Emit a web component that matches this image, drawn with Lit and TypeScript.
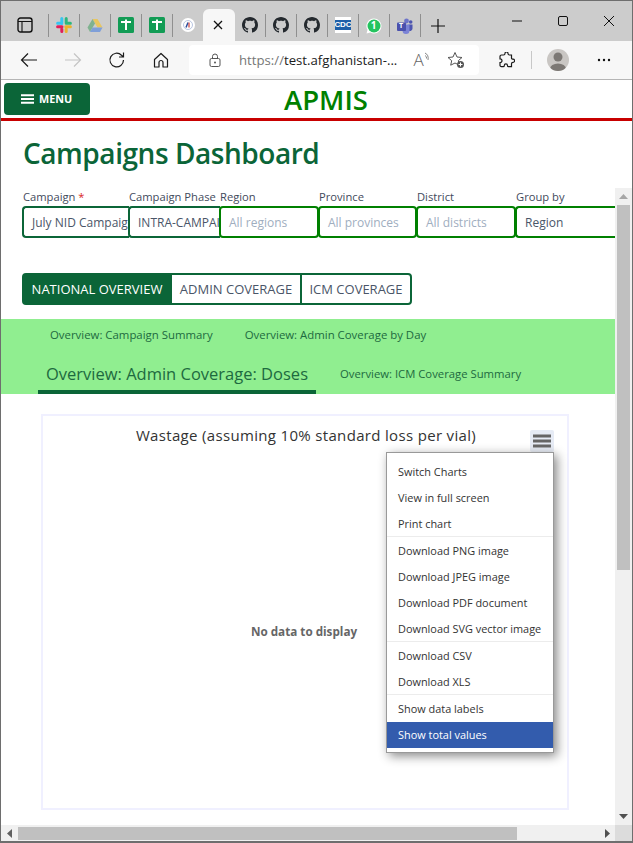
import { LitElement, html, css } from "lit";
import { customElement } from "lit/decorators.js";

const GH = "M8 0C3.58 0 0 3.58 0 8c0 3.54 2.29 6.53 5.47 7.59.4.07.55-.17.55-.38 0-.19-.01-.82-.01-1.49-2.01.37-2.53-.49-2.69-.94-.09-.23-.48-.94-.82-1.13-.28-.15-.68-.52-.01-.53.63-.01 1.08.58 1.23.82.72 1.21 1.87.87 2.33.66.07-.52.28-.87.51-1.07-1.78-.2-3.64-.89-3.64-3.95 0-.87.31-1.59.82-2.15-.08-.2-.36-1.02.08-2.12 0 0 .67-.21 2.2.82.64-.18 1.32-.27 2-.27.68 0 1.36.09 2 .27 1.53-1.04 2.2-.82 2.2-.82.44 1.1.16 1.92.08 2.12.51.56.82 1.27.82 2.15 0 3.07-1.87 3.75-3.65 3.95.29.25.54.73.54 1.48 0 1.07-.01 1.93-.01 2.2 0 .21.15.46.55.38A8.013 8.013 0 0016 8c0-4.42-3.58-8-8-8z";

const github = html`<svg width="16" height="16" viewBox="0 0 16 16"><path d=${GH} fill="#24292e"/></svg>`;
const slack = html`<svg width="16" height="16" viewBox="0 0 16 16" fill="none" stroke-width="3" stroke-linecap="round">
  <path d="M5.8 1.6V6.4M1.6 6.2H4" stroke="#36c5f0"/><path d="M10.2 1.6V6.2M12 6.2h2.4" stroke="#2eb67d"/>
  <path d="M14.4 9.8H9.8M10.2 12v2.4" stroke="#ecb22e"/><path d="M1.6 9.8H6M5.8 12v2.4" stroke="#e01e5a"/></svg>`;
const drive = html`<svg width="16" height="15" viewBox="0 0 16 15">
  <path d="M5.5 1h5l5 8.5h-5z" fill="#e8c660"/><path d="M5.5 1 .5 9.5 3 14l5-8.5z" fill="#7fb28f"/><path d="M3 14h10l2.500-4.500H5.500z" fill="#7f9fd8"/></svg>`;
const sheet = html`<svg width="16" height="16" viewBox="0 0 16 16"><rect width="16" height="16" rx="1.500" fill="#129c55"/><path d="M3 5h10M8 2.500V13" stroke="#fff" stroke-width="2"/></svg>`;
const apmis = html`<svg width="14" height="14" viewBox="0 0 14 14"><circle cx="7" cy="7" r="7" fill="#fff"/><circle cx="7" cy="7" r="4.500" fill="none" stroke="#b9c6e2" stroke-width="1"/><path d="M5 9.500 7 4.500" stroke="#2c4f9e" stroke-width="1.500"/><path d="M8 9.500V4.500" stroke="#c83c3c" stroke-width="1.200"/></svg>`;
const whatsapp = html`<span class="wa"><svg width="16" height="16" viewBox="0 0 16 16"><path d="M8 .5a7.500 7.500 0 0 1 0 15c-1.300 0-2.500-.3-3.600-.9L.5 15.500l1-3.700A7.500 7.500 0 0 1 8 .5z" fill="#fff"/><circle cx="8" cy="8" r="6.500" fill="#25c35f"/></svg><b>1</b></span>`;
const teams = html`<span class="teams"><svg width="16" height="16" viewBox="0 0 16 16"><circle cx="9.500" cy="3" r="2.400" fill="#6d74c9"/><circle cx="13.700" cy="4" r="1.800" fill="#4d55b0"/><path d="M11.500 6.500h4v4a2.500 2.500 0 0 1-4 2z" fill="#4d55b0"/><path d="M5.500 6.500h7v6a3.500 3.500 0 0 1-7 0z" fill="#7b83d6"/><rect x="0" y="4.500" width="9" height="8.500" rx="1" fill="#4a51ad"/></svg><b>T</b></span>`;

const MENU: { label: string; sep?: boolean; active?: boolean }[] = [
  { label: "Switch Charts" }, { label: "View in full screen" }, { label: "Print chart", sep: true },
  { label: "Download PNG image" }, { label: "Download JPEG image" }, { label: "Download PDF document" },
  { label: "Download SVG vector image", sep: true }, { label: "Download CSV" }, { label: "Download XLS", sep: true },
  { label: "Show data labels" }, { label: "Show total values", active: true },
];

const FILTERS = [
  { label: "Campaign", req: true, value: "July NID Campaign", cls: "dark" },
  { label: "Campaign Phase", value: "INTRA-CAMPAIGN", cls: "dark" },
  { label: "Region", value: "All regions", cls: "ph" },
  { label: "Province", value: "All provinces", cls: "ph" },
  { label: "District", value: "All districts", cls: "ph" },
  { label: "Group by", value: "Region", cls: "" },
];

@customElement("app-root")
export class AppRoot extends LitElement {
  static styles = css`
    :host { display: block; width: 633px; height: 843px; font-family: "Open Sans", sans-serif; overflow: hidden; }
    .win { width: 633px; height: 843px; box-sizing: border-box; border: 1px solid #6e6e6e; border-bottom-width: 2px; display: flex; flex-direction: column; background: #fff; }
    .tabs { height: 40px; flex: none; background: #cccccc; display: flex; align-items: flex-end; }
    .tside { width: 47px; height: 31px; display: flex; align-items: center; justify-content: center; padding-bottom: 1px; box-sizing: border-box; }
    .tab { width: 31px; height: 31px; padding: 0 1px 1px 0; display: flex; align-items: center; justify-content: center; box-sizing: border-box; border-left: 1px solid #8f8f8f; border-image: linear-gradient(#ccc 0 5px, #8f8f8f 5px 26px, #ccc 26px) 1; }
    .tab.nb { width: 30px; border-image: none; border-left: none; }
    .active { width: 32px; height: 32px; padding-right: 3px; box-sizing: border-box; background: #f7f7f7; border-radius: 6px 6px 0 0; display: flex; align-items: center; justify-content: center; }
    .plus { width: 36px; height: 31px; padding-right: 2px; display: flex; align-items: center; justify-content: center; box-sizing: border-box; border-left: 1px solid #8f8f8f; border-image: linear-gradient(#ccc 0 5px, #8f8f8f 5px 26px, #ccc 26px) 1; }
    .sp { flex: 1; }
    .ctl { width: 46px; height: 40px; display: flex; align-items: flex-start; justify-content: center; padding-top: 14px; box-sizing: border-box; }
    .cdc { display: block; width: 16px; height: 16px; background: #fff; overflow: hidden; }
    .cdc span { display: block; margin-top: 3px; height: 10px; background: #1d5fa8; color: #fff; font: 700 8px/10px "Liberation Sans", sans-serif; text-align: center; letter-spacing: -.2px; }
    .wa, .teams { position: relative; display: block; width: 16px; height: 16px; }
    .wa b { position: absolute; inset: 0; text-align: center; color: #fff; font: 700 10px/16px "Open Sans", sans-serif; }
    .teams b { position: absolute; left: 0; top: 4px; width: 9px; text-align: center; color: #fff; font: 700 7px/9px "Open Sans", sans-serif; }
    .bar { height: 38px; flex: none; background: #f7f7f7; border-bottom: 1px solid #b5b5b5; display: flex; align-items: center; }
    .ib { width: 44px; height: 38px; display: flex; align-items: center; justify-content: center; flex: none; }
    .ib.first { margin-left: 6px; }
    .ib.ext { margin-left: 6px; }
    .ib.prof { width: 52px; }
    .ib.more { width: 40px; }
    .addr { width: 290px; height: 30px; background: #fff; border-radius: 4px; margin-left: 6px; display: flex; align-items: center; flex: none; color: #1c1c1c; font: 400 14px/30px "Open Sans", sans-serif; }
    .lock { width: 50px; padding-left: 2px; box-sizing: border-box; display: flex; justify-content: center; flex: none; }
    .url { width: 160px; flex: none; white-space: nowrap; font-size: 13.2px; }
    .url i { font-style: normal; color: #767676; }
    .aa { width: 46px; flex: none; color: #666; font-size: 17px; font-weight: 300; display: flex; justify-content: center; align-items: center; }
    .fav { width: 22px; flex: none; display: flex; justify-content: center; }
    .vsep { width: 1px; height: 18px; background: #c8c8c8; flex: none; margin-left: 2px; }
    .avatar { width: 22px; height: 22px; border-radius: 50%; background: #c9c6c3; overflow: hidden; display: block; }
    .head { height: 38px; flex: none; border-bottom: 3px solid #c80000; display: flex; align-items: center; }
    .menu { margin-left: 3px; width: 86px; height: 32px; background: #0b6538; border-radius: 4px; color: #fff; font: 700 10.8px/32px "Open Sans", sans-serif; display: flex; align-items: center; padding-left: 17px; box-sizing: border-box; gap: 5px; flex: none; }
    .brand { flex: 1; text-align: center; padding-right: 70px; padding-top: 1px; color: #008000; font: 600 27.5px/37px "Open Sans", sans-serif; }
    .title { height: 67px; flex: none; padding-left: 22px; color: #0b6538; font: 600 28px/64px "Open Sans", sans-serif; letter-spacing: -.45px; white-space: nowrap; }
    .scrollrow { flex: 1; min-height: 0; display: flex; }
    .page { flex: 1; min-width: 0; overflow: hidden; }
    .vbar { width: 17px; flex: none; background: #f0f0f0; display: flex; flex-direction: column; align-items: center; }
    .vbar .thumb { width: 13px; height: 365px; background: #c0c0c0; flex: none; }
    .arrow { height: 17px; flex: none; display: flex; align-items: center; justify-content: center; }
    .vfill { flex: 1; }
    .filters { display: grid; grid-template-columns: 106px 91px 99px 98px 99px 100px; padding-left: 21px; height: 50px; }
    .f { min-width: 0; position: relative; }
    .f label { display: block; height: 18px; padding-left: 1px; font: 500 11.2px/18px "Open Sans", sans-serif; color: #3f4a5c; white-space: nowrap; }
    .f label em { font-style: normal; color: #d92626; }
    .inp { height: 32px; width: calc(100% + 1px); box-sizing: border-box; border: 2px solid #008000; border-radius: 4px; background: #fff; padding-left: 8px; font: 400 12px/29px "Open Sans", sans-serif; color: #4a5568; white-space: nowrap; overflow: hidden; }
    .inp.dark { border-color: #0b6538; border-right: none; border-radius: 4px 0 0 4px; }
    .inp.ph { color: #a0aec0; }
    .f:last-child .inp { border-right: none; border-radius: 4px 0 0 4px; width: 100%; }
    .group { margin: 35px 0 0 21px; width: 390px; height: 32px; box-sizing: border-box; border: 2px solid #0b6538; border-radius: 4px; display: flex; font: 400 13px/28px "Open Sans", sans-serif; color: #4a5568; }
    .group span { text-align: center; box-sizing: border-box; white-space: nowrap; }
    .group .on { width: 148px; padding-right: 2px; background: #0b6538; color: #fff; font-weight: 500; }
    .group .g2 { width: 128px; }
    .group .g3 { flex: 1; border-left: 2px solid #0b6538; }
    .band { margin-top: 14px; height: 75px; background: #90ee90; color: #1d6a3f; }
    .r1 { height: 35px; padding: 7px 0 0 49px; display: flex; gap: 32px; font: 500 11.4px/17px "Open Sans", sans-serif; white-space: nowrap; box-sizing: border-box; }
    .r2 { height: 40px; display: flex; padding-left: 37px; white-space: nowrap; align-items: flex-start; }
    .big { width: 278px; height: 40px; padding-top: 2px; box-sizing: border-box; border-bottom: 4px solid #0b6538; text-align: center; font: 500 16.5px/36px "Open Sans", sans-serif; flex: none; }
    .small { margin-left: 24px; font: 500 11.3px/40px "Open Sans", sans-serif; }
    .chart { margin: 20px 0 0 40px; width: 528px; height: 396px; box-sizing: border-box; border: 2px solid #f0f0ff; position: relative; background: #fff; }
    .ctitle { text-align: center; font: 400 15px/20px "Open Sans", sans-serif; color: #333; padding: 9px 0 0 2px; letter-spacing: .33px; white-space: nowrap; }
    .nodata { position: absolute; left: 0; right: 2px; top: 207px; text-align: center; font: 700 11.7px/16px "Open Sans", sans-serif; color: #666; }
    .hamb { position: absolute; left: 487px; top: 14px; width: 24px; height: 22px; background: #e6ebf5; border-radius: 2px; display: flex; align-items: center; justify-content: center; }
    .pop { position: absolute; left: 343px; top: 36px; width: 168px; height: 301px; box-sizing: border-box; border: 1px solid #999; background: #fff; box-shadow: 3px 3px 10px #888; padding-top: 6px; font: 400 10.92px/26px "Open Sans", sans-serif; color: #333; }
    .item { height: 26px; padding-left: 11px; white-space: nowrap; }
    .item.sep { box-shadow: inset 0 -1px 0 #ececec; margin-bottom: 1px; }
    .item.on { background: #335cad; color: #fff; }
    .hbar { height: 16px; flex: none; background: #f0f0f0; display: flex; align-items: center; }
    .hbar .thumb { width: 499px; height: 13px; margin-left: 1px; background: #c0c0c0; }
    .ha { width: 16px; height: 16px; display: flex; align-items: center; justify-content: center; flex: none; }
    .corner { width: 17px; height: 16px; background: #dcdcdc; flex: none; }
  `;

  render() {
    const ico = (inner: unknown, nb = false) => html`<div class="tab ${nb ? "nb" : ""}">${inner}</div>`;
    const s = "fill:none;stroke:#1b1b1b;stroke-width:1.200";
    return html`<div class="win">
      <div class="tabs">
        <div class="tside"><svg width="16" height="16" viewBox="0 0 16 16"><rect x="1" y="1" width="14" height="14" rx="2.500" fill="none" stroke="#111" stroke-width="1.400"/><path d="M1 4.500h14M5 4.500V15" fill="none" stroke="#111" stroke-width="1.100"/></svg></div>
        ${ico(slack)}${ico(drive)}${ico(sheet)}${ico(sheet)}${ico(apmis)}
        <div class="active"><svg width="10" height="10" viewBox="0 0 10 10"><path d="M1 1l8 8M9 1l-8 8" stroke="#111" stroke-width="1.300"/></svg></div>
        ${ico(github, true)}${ico(github)}${ico(github)}
        ${ico(html`<span class="cdc"><span>CDC</span></span>`)}${ico(whatsapp)}${ico(teams)}
        <div class="plus"><svg width="16" height="16" viewBox="0 0 16 16"><path d="M8 1v14M1 8h14" stroke="#111" stroke-width="1.200"/></svg></div>
        <div class="sp"></div>
        <div class="ctl"><svg width="12" height="12" viewBox="0 0 12 12"><path d="M1 6h10" stroke="#111"/></svg></div>
        <div class="ctl"><svg width="12" height="12" viewBox="0 0 12 12"><rect x="1.500" y="1.500" width="9" height="9" rx="1.500" fill="none" stroke="#111"/></svg></div>
        <div class="ctl"><svg width="12" height="12" viewBox="0 0 12 12"><path d="M1 1l10 10M11 1L1 11" stroke="#111"/></svg></div>
      </div>
      <div class="bar">
        <div class="ib first"><svg width="18" height="16" viewBox="0 0 18 16"><path d="M17 8H1.500M8 1.500 1.500 8 8 14.500" style=${s}/></svg></div>
        <div class="ib"><svg width="18" height="16" viewBox="0 0 18 16"><path d="M1 8h15.500M10 1.500 16.500 8 10 14.500" fill="none" stroke="#c4c4c4" stroke-width="1.200"/></svg></div>
        <div class="ib"><svg width="18" height="18" viewBox="0 0 18 18"><path d="M15.500 9a6.800 6.800 0 1 1-2-4.800L15.500 6M15.500 1.500V6H11" style=${s}/></svg></div>
        <div class="ib"><svg width="16" height="16" viewBox="0 0 16 16"><path d="M1.500 7.500 8 1.500l6.500 6V15H10v-4.500a2 2 0 0 0-4 0V15H1.500z" style=${s} stroke-linejoin="round"/></svg></div>
        <div class="addr">
          <div class="lock"><svg width="14" height="14" viewBox="0 0 14 14"><rect x="2" y="5.500" width="10" height="8" rx="1.500" fill="none" stroke="#555" stroke-width="1"/><path d="M4.500 5.500V3.500a2.500 2.500 0 0 1 5 0v2" fill="none" stroke="#555"/><circle cx="7" cy="9.500" r="1" fill="#555"/></svg></div>
          <div class="url"><i>https://</i>test.afghanistan-...</div>
          <div class="aa"><span>A</span><svg width="7" height="10" viewBox="0 0 7 10" style="margin-top:-6px"><path d="M1 1q4 2 3 7M1 3.500q2 1 1.500 3" fill="none" stroke="#777" stroke-width=".9"/></svg></div>
          <div class="fav"><svg width="18" height="18" viewBox="0 0 18 18"><path d="M8 1.500l2 4.500 5 .5-3.700 3.200 1 4.500L8 12l-4.300 2.200 1-4.500L1 6.500 6 6z" fill="none" stroke="#555"/><circle cx="13.500" cy="13.500" r="3.500" fill="#555"/><path d="M13.500 11.500v4M11.500 13.500h4" stroke="#fff"/></svg></div>
        </div>
        <div class="ib ext"><svg width="16" height="16" viewBox="0 0 16 16"><path d="M6 1.500a1.500 1.500 0 0 1 3 0c0 1 .5 1.500 1.500 1.500h2v3c0 1 1 1.200 1.500 1.200a1.600 1.600 0 0 1 0 3.200c-.7 0-1.500.5-1.500 1.300v3h-3c-.8 0-1 -.8-1-1.300a1.600 1.600 0 0 0-3.200 0c0 .7-.3 1.300-1.100 1.300h-1.700A1.500 1.500 0 0 1 1 13v-2.500c1.200 0 2-.6 2-1.800s-.8-1.900-2-1.900V4.500A1.500 1.500 0 0 1 2.500 3H4.500C5.500 3 6 2.500 6 1.500z" style=${s}/></svg></div>
        <div class="vsep"></div>
        <div class="ib prof"><span class="avatar"><svg width="22" height="22" viewBox="0 0 22 22"><circle cx="11" cy="8" r="4.500" fill="#7c7874"/><ellipse cx="11" cy="20" rx="8" ry="5.500" fill="#7c7874"/></svg></span></div>
        <div class="ib more"><svg width="14" height="4" viewBox="0 0 14 4"><circle cx="2" cy="2" r="1.200" fill="#111"/><circle cx="7" cy="2" r="1.200" fill="#111"/><circle cx="12" cy="2" r="1.200" fill="#111"/></svg></div>
      </div>
      <div class="head">
        <div class="menu"><svg width="13" height="10" viewBox="0 0 13 10"><path d="M0 1.200h13M0 5h13M0 8.800h13" stroke="#fff" stroke-width="2"/></svg>MENU</div>
        <div class="brand">APMIS</div>
      </div>
      <div class="title">Campaigns Dashboard</div>
      <div class="scrollrow">
        <div class="page">
          <div class="filters">
            ${FILTERS.map((f) => html`<div class="f"><label>${f.label}${f.req ? html` <em>*</em>` : ""}</label><div class="inp ${f.cls}">${f.value}</div></div>`)}
          </div>
          <div class="group"><span class="on">NATIONAL OVERVIEW</span><span class="g2">ADMIN COVERAGE</span><span class="g3">ICM COVERAGE</span></div>
          <div class="band">
            <div class="r1"><span>Overview: Campaign Summary</span><span>Overview: Admin Coverage by Day</span></div>
            <div class="r2"><span class="big">Overview: Admin Coverage: Doses</span><span class="small">Overview: ICM Coverage Summary</span></div>
          </div>
          <div class="chart">
            <div class="ctitle">Wastage (assuming 10% standard loss per vial)</div>
            <div class="nodata">No data to display</div>
            <div class="hamb"><svg width="18" height="14" viewBox="0 0 18 14"><path d="M0 2h18M0 7h18M0 12h18" stroke="#666" stroke-width="3"/></svg></div>
            <div class="pop">
              ${MENU.map((m) => html`<div class="item ${m.sep ? "sep" : ""} ${m.active ? "on" : ""}">${m.label}</div>`)}
            </div>
          </div>
        </div>
        <div class="vbar">
          <div class="arrow"><svg width="9" height="5" viewBox="0 0 9 5"><path d="M4.500 0 9 5H0z" fill="#a6a6a6"/></svg></div>
          <div class="thumb"></div>
          <div class="vfill"></div>
          <div class="arrow"><svg width="9" height="5" viewBox="0 0 9 5"><path d="M0 0h9L4.500 5z" fill="#505050"/></svg></div>
        </div>
      </div>
      <div class="hbar">
        <div class="ha"><svg width="5" height="9" viewBox="0 0 5 9"><path d="M5 0v9L0 4.500z" fill="#606060"/></svg></div>
        <div class="thumb"></div>
        <div class="sp"></div>
        <div class="ha"><svg width="5" height="9" viewBox="0 0 5 9"><path d="M0 0v9l5-4.500z" fill="#505050"/></svg></div>
        <div class="corner"></div>
      </div>
    </div>`;
  }
}
